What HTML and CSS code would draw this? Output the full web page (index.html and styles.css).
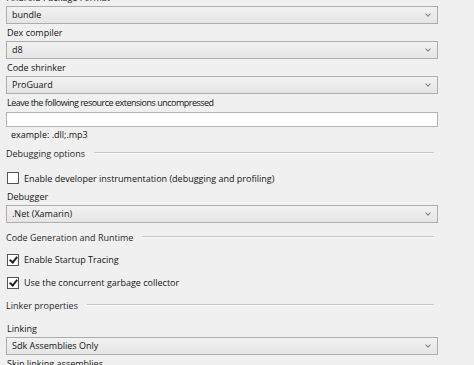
FILE: index.html
```html
<!DOCTYPE html>
<html lang="en">
<head>
  <meta charset="UTF-8">
  <title>Android Options</title>
  <link rel="stylesheet" href="styles.css">
</head>
<body>
  <div class="panel">
    <div class="label">Android Package Format</div>
    <div class="select"><span>bundle</span><i class="chev"></i></div>

    <div class="label">Dex compiler</div>
    <div class="select"><span>d8</span><i class="chev"></i></div>

    <div class="label">Code shrinker</div>
    <div class="select"><span>ProGuard</span><i class="chev"></i></div>

    <div class="label tight">Leave the following resource extensions uncompressed</div>
    <div class="textbox"></div>
    <div class="hint">example: .dll;.mp3</div>

    <div class="group">Debugging options</div>
    <div class="check tall"><span class="box"></span>Enable developer instrumentation (debugging and profiling)</div>

    <div class="label short">Debugger</div>
    <div class="select"><span>.Net (Xamarin)</span><i class="chev"></i></div>

    <div class="group spaced">Code Generation and Runtime</div>
    <div class="check"><span class="box checked"></span>Enable Startup Tracing</div>
    <div class="check"><span class="box checked"></span>Use the concurrent garbage collector</div>

    <div class="group">Linker properties</div>

    <div class="label spaced">Linking</div>
    <div class="select"><span>Sdk Assemblies Only</span><i class="chev"></i></div>

    <div class="label">Skip linking assemblies</div>
  </div>
</body>
</html>
```

FILE: styles.css
```css
body {
  margin: 0;
  background: #f0f0f0;
  font-family: 'Open Sans', 'Noto Sans', sans-serif;
  font-size: 9px;
  color: #141414;
  overflow: hidden;
}

.panel {
  width: 432px;
  padding-left: 6px;
  margin-top: -11px;
}

.label {
  height: 17px;
  line-height: 17px;
  padding-left: 1px;
}

.label.tight {
  letter-spacing: -0.5px;
}

.label.short {
  height: 16px;
  line-height: 16px;
}

.label.spaced {
  margin-top: 4px;
}

.select {
  box-sizing: border-box;
  height: 18px;
  border: 1px solid #adadad;
  background: linear-gradient(#f2f2f2, #e5e5e5);
  display: flex;
  align-items: center;
  justify-content: space-between;
  padding: 0 7px 0 5px;
}

.select span {
  line-height: 16px;
}

.chev {
  width: 3px;
  height: 3px;
  border-right: 1px solid #808080;
  border-bottom: 1px solid #808080;
  transform: rotate(45deg);
  margin-top: -2px;
}

.textbox {
  box-sizing: border-box;
  height: 15px;
  border: 1px solid #b4b4b4;
  background: #fff;
  margin-top: 1px;
}

.hint {
  height: 15px;
  line-height: 15px;
  padding-left: 5px;
}

.group {
  display: flex;
  align-items: center;
  height: 22px;
  padding-right: 4px;
  color: #2a2a2a;
}

.group.spaced {
  margin-top: 3px;
}

.group::after {
  content: "";
  flex: 1;
  height: 0;
  border-top: 1px solid #c6c6c6;
  border-bottom: 1px solid #fafafa;
  margin-left: 9px;
}

.check {
  display: flex;
  align-items: center;
  height: 23px;
}

.check.tall {
  box-sizing: border-box;
  height: 25px;
  padding-top: 3px;
}

.box {
  box-sizing: border-box;
  width: 12px;
  height: 12px;
  border: 1px solid #555;
  background: #fff;
  margin: 0 5px 0 1px;
  position: relative;
}

.box.checked::after {
  content: "";
  position: absolute;
  left: 3px;
  top: 0;
  width: 3px;
  height: 6px;
  border-right: 2px solid #222;
  border-bottom: 2px solid #222;
  transform: rotate(40deg);
}
```
